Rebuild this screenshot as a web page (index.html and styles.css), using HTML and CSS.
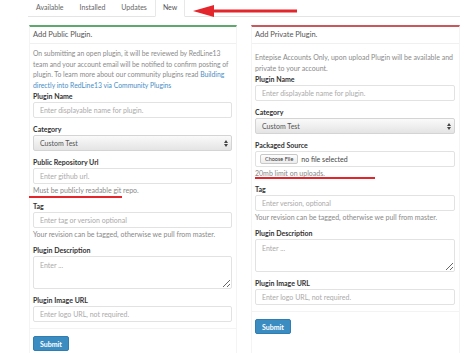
FILE: index.html
```html
<!DOCTYPE html>
<html lang="en">
<head>
  <meta charset="UTF-8">
  <title>Plugins - New</title>
  <link rel="stylesheet" href="styles.css">
</head>
<body>
  <div class="page">
    <div class="tabs-wrap">
      <ul class="tabs">
        <li>Available</li>
        <li>Installed</li>
        <li>Updates</li>
        <li class="active">New</li>
      </ul>
      <!-- annotation arrow pointing at the New tab -->
      <svg class="note-arrow" width="106" height="14" viewBox="0 0 106 14">
        <line x1="16" y1="7" x2="104" y2="7" stroke="#e3262b" stroke-width="3" />
        <polygon points="0,7 21,1 21,13" fill="#e3262b" />
      </svg>
    </div>

    <div class="columns">
      <section class="panel panel-public">
        <h3 class="panel-title">Add Public Plugin.</h3>
        <div class="panel-body">
          <p class="intro">On submitting an open plugin, it will be reviewed by RedLine13 team and your account email will be notified to confirm posting of plugin. To learn more about our community plugins read <a href="#">Building directly into RedLine13 via Community Plugins</a></p>

          <div class="field">
            <label>Plugin Name</label>
            <input class="control" type="text" placeholder="Enter displayable name for plugin.">
          </div>
          <div class="field">
            <label>Category</label>
            <div class="select">Custom Test
              <svg class="select-caret" width="4" height="7" viewBox="0 0 4 7"><polygon points="0,3 2,0 4,3" fill="#444"/><polygon points="0,4 2,7 4,4" fill="#444"/></svg>
            </div>
          </div>
          <div class="field">
            <label>Public Repository Url</label>
            <input class="control" type="text" placeholder="Enter github url.">
            <p class="help">Must be publicly readable git repo.</p>
            <span class="note-line note-left"></span>
          </div>
          <div class="field">
            <label>Tag</label>
            <input class="control" type="text" placeholder="Enter tag or version optional">
            <p class="help">Your revision can be tagged, otherwise we pull from master.</p>
          </div>
          <div class="field">
            <label>Plugin Description</label>
            <textarea class="control area" placeholder="Enter ..."></textarea>
          </div>
          <div class="field">
            <label>Plugin Image URL</label>
            <input class="control" type="text" placeholder="Enter logo URL, not required.">
          </div>
        </div>
        <div class="panel-footer">
          <button class="btn">Submit</button>
        </div>
      </section>

      <section class="panel panel-private">
        <h3 class="panel-title">Add Private Plugin.</h3>
        <div class="panel-body">
          <p class="intro intro-short">Entepise Accounts Only, upon upload Plugin will be available and private to your account.</p>

          <div class="field">
            <label>Plugin Name</label>
            <input class="control" type="text" placeholder="Enter displayable name for plugin.">
          </div>
          <div class="field">
            <label>Category</label>
            <div class="select">Custom Test
              <svg class="select-caret" width="4" height="7" viewBox="0 0 4 7"><polygon points="0,3 2,0 4,3" fill="#444"/><polygon points="0,4 2,7 4,4" fill="#444"/></svg>
            </div>
          </div>
          <div class="field">
            <label>Packaged Source</label>
            <div class="file">
              <span class="file-btn">Choose File</span>
              <span class="file-name">no file selected</span>
            </div>
            <p class="help">20mb limit on uploads.</p>
            <span class="note-line note-right"></span>
          </div>
          <div class="field">
            <label>Tag</label>
            <input class="control" type="text" placeholder="Enter version, optional">
            <p class="help">Your revision can be tagged, otherwise we pull from master.</p>
          </div>
          <div class="field">
            <label>Plugin Description</label>
            <textarea class="control area" placeholder="Enter ..."></textarea>
          </div>
          <div class="field">
            <label>Plugin Image URL</label>
            <input class="control" type="text" placeholder="Enter logo URL, not required.">
          </div>
        </div>
        <div class="panel-footer">
          <button class="btn">Submit</button>
        </div>
      </section>
    </div>
  </div>
</body>
</html>
```

FILE: styles.css
```css
html, body {
  margin: 0;
  padding: 0;
  background-color: #fff;
}
body {
  font-family: Lato, 'Open Sans', sans-serif;
  font-size: 7px;
  line-height: 10px;
  color: #555;
  overflow: hidden;
}
.page {
  width: 431px;
  margin-left: 29px;
}

/* tabs */
.tabs-wrap {
  position: relative;
}
.tabs {
  display: flex;
  list-style: none;
  margin: 0 0 0 -1px;
  padding: 0;
  border-bottom: 1px solid #e4e4e4;
}
.tabs li {
  padding: 2px 7px 4px;
  font-size: 7px;
  color: #666;
  border: 1px solid transparent;
  border-top: 0;
  margin-bottom: -1px;
}
.tabs li.active {
  color: #555;
  border-color: #e8e8e8;
  border-bottom-color: #fff;
  background-color: #fff;
}
.note-arrow {
  position: absolute;
  left: 164px;
  top: 4px;
}

/* columns / panels */
.columns {
  display: grid;
  grid-template-columns: 208px 209px;
  column-gap: 14px;
  margin-top: 8px;
}
.panel {
  border: 1px solid #f4f4f4;
  border-top: 2px solid #5ea870;
}
.panel-private {
  border-top-color: #c9575b;
}
.panel-title {
  margin: 0;
  padding: 3px 3px 3px;
  font-size: 7.5px;
  font-weight: normal;
  line-height: 10px;
  color: #555;
  border-bottom: 1px solid #f0f0f0;
}
.panel-body {
  padding: 4px 4px 0 3px;
}
.intro {
  margin: 0 0 1px;
  font-size: 6.8px;
  line-height: 10.5px;
  color: #8a8a8a;
}
.intro-short {
  margin-top: 4px;
  font-size: 7px;
}
.intro a {
  color: #4a8ec6;
  text-decoration: none;
}

/* form fields */
.field {
  position: relative;
  margin-bottom: 6px;
}
.field label {
  display: block;
  font-weight: bold;
  color: #333;
  margin-bottom: 1px;
}
.control {
  display: block;
  box-sizing: border-box;
  width: 100%;
  height: 16px;
  margin: 0;
  padding: 0 6px;
  font-family: inherit;
  font-size: 7px;
  color: #555;
  border: 1px solid #e2e2e2;
  border-radius: 2px;
  background-color: #fff;
  outline: none;
}
.control::placeholder {
  color: #aaa;
}
.area {
  height: 33px;
  padding-top: 4px;
  resize: vertical;
}
.select {
  position: relative;
  box-sizing: border-box;
  height: 16px;
  padding: 0 6px;
  line-height: 14px;
  color: #555;
  border: 1px solid #d4d4d4;
  border-radius: 2px;
  background: linear-gradient(#fafafa, #e4e4e4);
}
.select-caret {
  position: absolute;
  right: 3px;
  top: 4px;
}
.file {
  display: flex;
  align-items: center;
  gap: 3px;
  box-sizing: border-box;
  height: 16px;
  padding: 0 4px;
  border: 1px solid #e2e2e2;
  border-radius: 2px;
}
.file-btn {
  font-size: 5.5px;
  line-height: 8px;
  padding: 0 4px;
  color: #333;
  border: 1px solid #c8c8c8;
  border-radius: 2px;
  background: linear-gradient(#fdfdfd, #ececec);
}
.file-name {
  color: #444;
}
.help {
  margin: 1px 0 0;
  color: #888;
}

/* red annotation underlines */
.note-line {
  position: absolute;
  height: 2px;
  background-color: #e3262b;
}
.note-left {
  left: -4px;
  width: 93px;
  bottom: -3px;
}
.note-right {
  left: 0;
  width: 120px;
  top: 37px;
}

.panel-footer {
  margin-top: 6px;
  padding: 7px 3px 3px;
  border-top: 1px solid #f3f3f3;
}
.btn {
  display: block;
  height: 15px;
  padding: 0 6px;
  font-family: inherit;
  font-size: 7px;
  font-weight: bold;
  color: #fff;
  background-color: #3b8cc1;
  border: 1px solid #2f7db2;
  border-radius: 2px;
}
```
